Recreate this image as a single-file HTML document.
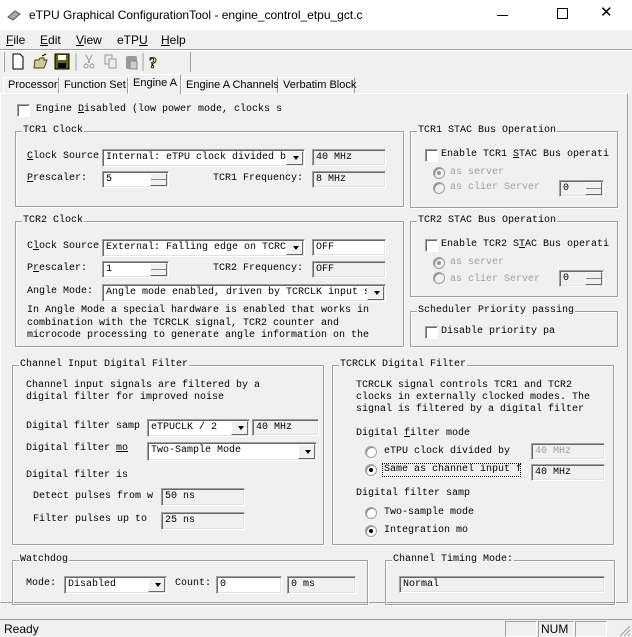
<!DOCTYPE html>
<html><head><meta charset="utf-8"><style>
*{box-sizing:border-box;margin:0;padding:0}
body{width:632px;height:637px;background:#f0f0f0;position:relative;overflow:hidden;font-family:"Liberation Mono","Noto Sans CJK SC",monospace;font-size:10px;color:#000}
.a{position:absolute;white-space:nowrap;line-height:12px}
.s{font-family:"Liberation Sans",sans-serif}
.g{position:absolute;border:1px solid #a0a0a0;box-shadow:inset 1px 1px 0 #fff,1px 1px 0 #fff}
.gl{position:absolute;top:-7px;left:6px;background:#f0f0f0;padding:0 1px;line-height:12px;white-space:nowrap}
.e{position:absolute;border:1px solid;border-color:#a0a0a0 #fff #fff #a0a0a0;box-shadow:inset 1px 1px 0 #696969,inset -1px -1px 0 #e3e3e3;background:#f0f0f0;padding:2px 0 0 3px;line-height:12px;white-space:nowrap;overflow:hidden}
.w{background:#fff}
.cb{position:absolute;border:1px solid;border-color:#a0a0a0 #fff #fff #a0a0a0;box-shadow:inset 1px 1px 0 #696969,inset -1px -1px 0 #e3e3e3;background:#fff;padding:2px 0 0 3px;line-height:12px;white-space:nowrap;overflow:hidden}
.cb:after{content:"";position:absolute;right:1px;top:1px;bottom:1px;width:15px;background:#f0f0f0;border:1px solid;border-color:#fff #696969 #696969 #fff}
.cb i{position:absolute;right:5px;top:50%;margin-top:-2px;width:0;height:0;border:3px solid transparent;border-top:4px solid #000;border-bottom:0;z-index:2}
.sp:after{content:"";position:absolute;right:1px;top:1px;bottom:1px;width:15px;background:linear-gradient(#f0f0f0 45%,#888 45%,#888 55%,#f0f0f0 55%);border:1px solid;border-color:#fff #696969 #696969 #fff}
.ck{position:absolute;width:13px;height:13px;background:#fff;border:1px solid;border-color:#a0a0a0 #fff #fff #a0a0a0;box-shadow:inset 1px 1px 0 #696969}
.r{position:absolute;width:12px;height:12px;border-radius:50%;background:#fff;border:1px solid #a0a0a0;box-shadow:inset 1px 1px 0 #888}
.r.on:after{content:"";position:absolute;left:3px;top:3px;width:4px;height:4px;border-radius:50%;background:#000}
.r.dis{background:#f0f0f0}
.r.dis.on:after{background:#999}
.dis{color:#a0a0a0}
.u{text-decoration:underline}
</style></head><body>
<div style="position:absolute;left:0;top:0;width:632px;height:30px;background:#fff"></div>
<svg class="a" style="left:6px;top:8px" width="16" height="14"><path d="M2 9 L9 3 L14 6 L7 12 Z" fill="#aaa" stroke="#555"/></svg>
<div class="a s" style="left:29px;top:8px;font-size:12px;line-height:14px">eTPU Graphical ConfigurationTool - engine_control_etpu_gct.c</div>
<div class="a" style="left:497px;top:15px;width:11px;height:1px;background:#000"></div>
<div class="a" style="left:557px;top:8px;width:11px;height:11px;border:1px solid #000"></div>
<div class="a s" style="left:600px;top:5px;font-size:15px;line-height:16px">✕</div>
<div class="a s" style="top:33px;left:6px;font-size:12px;line-height:14px"><span class="u">F</span>ile</div>
<div class="a s" style="top:33px;left:40px;font-size:12px;line-height:14px"><span class="u">E</span>dit</div>
<div class="a s" style="top:33px;left:76px;font-size:12px;line-height:14px"><span class="u">V</span>iew</div>
<div class="a s" style="top:33px;left:117px;font-size:12px;line-height:14px">eTP<span class="u">U</span></div>
<div class="a s" style="top:33px;left:161px;font-size:12px;line-height:14px"><span class="u">H</span>elp</div>
<div class="a" style="left:0;top:49px;width:632px;height:1px;background:#a0a0a0"></div>
<div class="a" style="left:0;top:50px;width:632px;height:1px;background:#fff"></div>
<div class="a" style="left:3px;top:52px;width:2px;height:20px;border-left:1px solid #fff;border-right:1px solid #a0a0a0"></div>
<svg class="a" style="left:10px;top:53px" width="180" height="18">
<path d="M3 1h7l3 3v12H3z" fill="#fff" stroke="#000"/>
<path d="M25 7h4l1-2h4v2h3l-3 8H24z" fill="#cc9" stroke="#440"/><path d="M32 3l4-2" stroke="#000"/>
<rect x="45" y="1" width="14" height="15" fill="#660" stroke="#000"/><rect x="48" y="2" width="8" height="5" fill="#fff"/><rect x="48" y="10" width="8" height="5" fill="#000"/>
<line x1="66" y1="0" x2="66" y2="18" stroke="#a0a0a0"/>
<path d="M76 2l4 8M82 2l-4 8" stroke="#999"/><circle cx="76" cy="13" r="2" fill="none" stroke="#999"/><circle cx="82" cy="13" r="2" fill="none" stroke="#999"/>
<rect x="95" y="2" width="7" height="9" fill="#eee" stroke="#999"/><rect x="99" y="6" width="7" height="9" fill="#eee" stroke="#999"/>
<rect x="116" y="3" width="11" height="13" rx="2" fill="#999"/><rect x="120" y="8" width="7" height="8" fill="#ccc" stroke="#888"/>
<line x1="133" y1="0" x2="133" y2="18" stroke="#a0a0a0"/>
<text x="139" y="15" font-size="16" font-weight="bold" fill="#ee0" stroke="#000" stroke-width="0.8" font-family="Liberation Serif">?</text>
</svg>
<div class="a" style="left:190px;top:52px;width:1px;height:20px;background:#a0a0a0"></div>
<div class="a" style="left:0;top:93px;width:628px;height:510px;border:1px solid;border-color:#fff #a0a0a0 #a0a0a0 #fff"></div>
<div class="a s" style="left:3px;top:77px;width:56px;height:17px;border:1px solid;border-color:#fff #a0a0a0 transparent #fff;font-size:11px;padding:1px 0 0 4px;line-height:13px">Processor</div>
<div class="a s" style="left:59px;top:77px;width:69px;height:17px;border:1px solid;border-color:#fff #a0a0a0 transparent #fff;font-size:11px;padding:1px 0 0 4px;line-height:13px">Function Set</div>
<div class="a s" style="left:128px;top:74px;width:53px;height:21px;border:1px solid;border-color:#fff #a0a0a0 transparent #fff;background:#f0f0f0;font-size:11px;padding:2px 0 0 4px;line-height:13px">Engine A</div>
<div class="a s" style="left:181px;top:77px;width:97px;height:17px;border:1px solid;border-color:#fff #a0a0a0 transparent #fff;font-size:11px;padding:1px 0 0 4px;line-height:13px">Engine A Channels</div>
<div class="a s" style="left:278px;top:77px;width:77px;height:17px;border:1px solid;border-color:#fff #a0a0a0 transparent #fff;font-size:11px;padding:1px 0 0 4px;line-height:13px">Verbatim Block</div>

<div class="ck" style="left:17px;top:104px"></div>
<div class="a" style="left:36px;top:104px">Engine <span class="u">D</span>isabled (low power mode, clocks s</div>

<div class="g" style="left:15px;top:131px;width:389px;height:76px"><div class="gl">TCR1 Clock</div></div>
<div class="a" style="left:27px;top:151px"><span class="u">C</span>lock Source</div>
<div class="cb" style="left:102px;top:149px;width:203px;height:18px">Internal: eTPU clock divided b<i></i></div>
<div class="e" style="left:312px;top:149px;width:74px;height:17px">40 MHz</div>
<div class="a" style="left:27px;top:173px"><span class="u">P</span>rescaler:</div>
<div class="cb sp" style="left:102px;top:171px;width:67px;height:17px">5</div>
<div class="a" style="left:213px;top:173px">TCR1 Frequency:</div>
<div class="e" style="left:312px;top:171px;width:74px;height:17px">8 MHz</div>

<div class="g" style="left:15px;top:221px;width:389px;height:126px"><div class="gl">TCR2 Clock</div></div>
<div class="a" style="left:27px;top:241px">C<span class="u">l</span>ock Source</div>
<div class="cb" style="left:102px;top:239px;width:203px;height:18px">External: Falling edge on TCRC<i></i></div>
<div class="e w" style="left:312px;top:239px;width:74px;height:17px">OFF</div>
<div class="a" style="left:27px;top:263px">P<span class="u">r</span>escaler:</div>
<div class="cb sp" style="left:102px;top:261px;width:67px;height:17px">1</div>
<div class="a" style="left:213px;top:263px">TCR2 Frequency:</div>
<div class="e" style="left:312px;top:261px;width:74px;height:17px">OFF</div>
<div class="a" style="left:27px;top:286px">Angle Mode:</div>
<div class="cb" style="left:102px;top:284px;width:284px;height:18px">Angle mode enabled, driven by TCRCLK input s<i></i></div>
<div class="a" style="left:27px;top:305px;line-height:12.5px">In Angle Mode a special hardware is enabled that works in<br>combination with the TCRCLK signal, TCR2 counter and<br>microcode processing to generate angle information on the</div>

<div class="g" style="left:410px;top:131px;width:208px;height:77px"><div class="gl">TCR1 STAC Bus Operation</div></div>
<div class="ck" style="left:425px;top:149px"></div>
<div class="a" style="left:441px;top:149px">Enable TCR1 <span class="u">S</span>TAC Bus operati</div>
<div class="r dis on" style="left:433px;top:167px"></div>
<div class="a dis" style="left:450px;top:167px">as server</div>
<div class="r dis" style="left:433px;top:182px"></div>
<div class="a dis" style="left:450px;top:182px">as clier Server</div>
<div class="e sp" style="left:559px;top:180px;width:45px;height:17px">0</div>

<div class="g" style="left:410px;top:221px;width:208px;height:76px"><div class="gl">TCR2 STAC Bus Operation</div></div>
<div class="ck" style="left:425px;top:239px"></div>
<div class="a" style="left:441px;top:239px">Enable TCR2 S<span class="u">T</span>AC Bus operati</div>
<div class="r dis on" style="left:433px;top:257px"></div>
<div class="a dis" style="left:450px;top:257px">as server</div>
<div class="r dis" style="left:433px;top:272px"></div>
<div class="a dis" style="left:450px;top:274px">as clier Server</div>
<div class="e sp" style="left:559px;top:270px;width:45px;height:17px">0</div>

<div class="g" style="left:410px;top:311px;width:208px;height:36px"><div class="gl">Scheduler Priority passing</div></div>
<div class="ck" style="left:425px;top:326px"></div>
<div class="a" style="left:441px;top:326px">Disable priority pa</div>

<div class="g" style="left:12px;top:365px;width:312px;height:180px"><div class="gl">Channel Input Digital Filter</div></div>
<div class="a" style="left:26px;top:380px;line-height:12px">Channel input signals are filtered by a<br>digital filter for improved noise</div>
<div class="a" style="left:26px;top:421px">Di<span class="u">g</span>ital filter samp</div>
<div class="cb" style="left:147px;top:419px;width:103px;height:18px">eTPUCLK / 2<i></i></div>
<div class="e" style="left:252px;top:419px;width:67px;height:17px">40 MHz</div>
<div class="a" style="left:26px;top:443px">Digital filter <span class="u">mo</span></div>
<div class="cb" style="left:147px;top:442px;width:170px;height:19px">Two-Sample Mode<i></i></div>
<div class="a" style="left:26px;top:470px">Digital filter is</div>
<div class="a" style="left:33px;top:491px">Detect pulses from w</div>
<div class="e" style="left:161px;top:488px;width:84px;height:18px">50 ns</div>
<div class="a" style="left:33px;top:514px">Filter pulses up to</div>
<div class="e" style="left:161px;top:512px;width:84px;height:18px">25 ns</div>

<div class="g" style="left:332px;top:365px;width:282px;height:180px"><div class="gl">TCRCLK Digital Filter</div></div>
<div class="a" style="left:356px;top:380px">TCRCLK signal controls TCR1 and TCR2<br>clocks in externally clocked modes. The<br>signal is filtered by a digital filter</div>
<div class="a" style="left:356px;top:428px">Digital <span class="u">f</span>ilter mode</div>
<div class="r" style="left:365px;top:446px"></div>
<div class="a" style="left:384px;top:446px">eTPU clock divided by</div>
<div class="e dis" style="left:531px;top:443px;width:74px;height:17px">40 MHz</div>
<div class="r on" style="left:365px;top:464px"></div>
<div class="a" style="left:382px;top:463px;border:1px dotted #000;padding:0 1px;width:139px;overflow:hidden">Same as channel input f</div>
<div class="e" style="left:531px;top:464px;width:74px;height:17px">40 MHz</div>
<div class="a" style="left:356px;top:488px">Digital filter samp</div>
<div class="r" style="left:365px;top:507px"></div>
<div class="a" style="left:384px;top:507px">Two-sample mode</div>
<div class="r on" style="left:365px;top:525px"></div>
<div class="a" style="left:384px;top:525px">Integration mo</div>

<div class="g" style="left:12px;top:560px;width:356px;height:45px"><div class="gl">Watchdog</div></div>
<div class="a" style="left:26px;top:578px">Mode:</div>
<div class="cb" style="left:64px;top:576px;width:103px;height:18px">Disabled<i></i></div>
<div class="a" style="left:175px;top:578px">Count:</div>
<div class="e w" style="left:216px;top:576px;width:66px;height:18px">0</div>
<div class="e" style="left:287px;top:576px;width:69px;height:18px">0 ms</div>

<div class="g" style="left:385px;top:560px;width:230px;height:45px"><div class="gl">Channel Timing Mode:</div></div>
<div class="e" style="left:399px;top:576px;width:206px;height:17px">Normal</div>

<div class="a" style="left:0;top:619px;width:632px;height:1px;background:#a0a0a0"></div>
<div class="a s" style="left:4px;top:622px;font-size:12px;line-height:14px">Ready</div>
<div class="a" style="left:505px;top:621px;width:32px;height:16px;border:1px solid;border-color:#a0a0a0 #fff #fff #a0a0a0"></div>
<div class="a s" style="left:538px;top:621px;width:36px;height:16px;border:1px solid;border-color:#a0a0a0 #fff #fff #a0a0a0;font-size:12px;line-height:14px;padding-left:2px">NUM</div>
<div class="a" style="left:575px;top:621px;width:32px;height:16px;border:1px solid;border-color:#a0a0a0 #fff #fff #a0a0a0"></div>
<svg class="a" style="left:617px;top:623px" width="14" height="14"><path d="M13 3L3 13M13 7L7 13M13 11L11 13" stroke="#a0a0a0"/></svg>
</body></html>
